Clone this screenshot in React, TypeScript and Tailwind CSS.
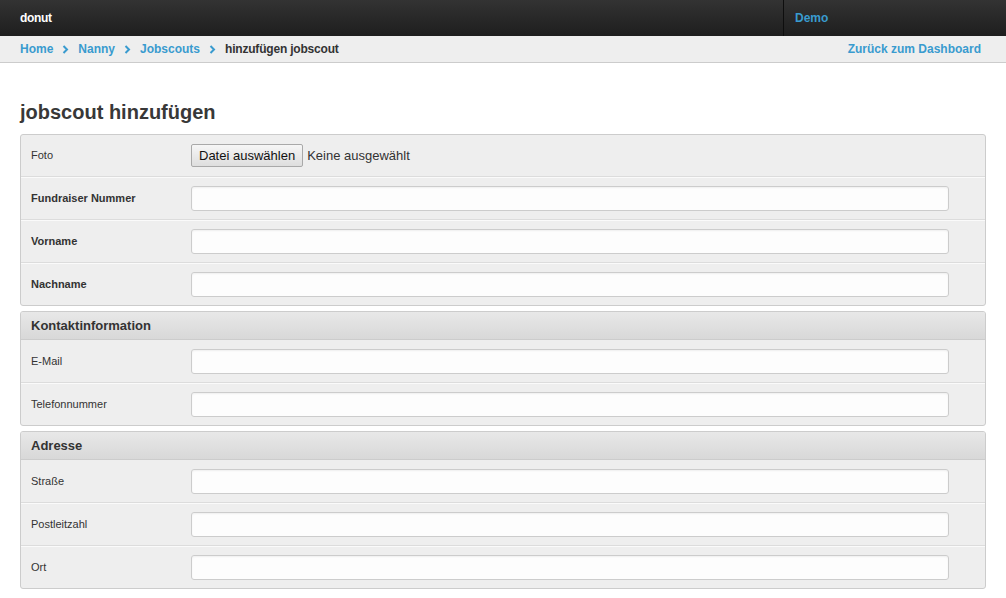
import React from "react"

type Field = { label: string; bold?: boolean; file?: boolean }

const stammdaten: Field[] = [
  { label: "Foto", file: true },
  { label: "Fundraiser Nummer", bold: true },
  { label: "Vorname", bold: true },
  { label: "Nachname", bold: true },
]

const kontakt: Field[] = [{ label: "E-Mail" }, { label: "Telefonnummer" }]

const adresse: Field[] = [{ label: "Straße" }, { label: "Postleitzahl" }, { label: "Ort" }]

function Row({ field, first, titled }: { field: Field; first: boolean; titled: boolean }) {
  const rowCls = first
    ? titled
      ? "h-[42px]"
      : "h-[41px]"
    : "h-[43px] border-t border-[#dcdcdc] shadow-[inset_0_1px_0_#fafafa]"
  return (
    <div className={`flex items-center pl-[10px] ${rowCls}`}>
      <label className={`w-[160px] text-[11px] text-[#333] ${field.bold ? "font-bold" : ""}`}>
        {field.label}
      </label>
      {field.file ? (
        <div className="flex items-center gap-[4px] text-[13px] text-[#333]">
          <span className="rounded-[2px] border border-[#a9a9a9] bg-gradient-to-b from-[#f6f6f6] to-[#dedede] px-[7px] py-[1px] text-[#111]">
            Datei auswählen
          </span>
          <span>Keine ausgewählt</span>
        </div>
      ) : (
        <input
          type="text"
          className="h-[25px] w-[758px] rounded-[3px] border border-[#cccccc] bg-[#fdfdfd] px-2 text-[13px] shadow-[inset_0_1px_2px_rgba(0,0,0,0.06)] outline-none"
        />
      )}
    </div>
  )
}

function Panel({ title, fields }: { title?: string; fields: Field[] }) {
  return (
    <div className="overflow-hidden rounded-[3px] border border-[#cccccc] bg-[#eeeeee]">
      {title && (
        <div className="flex h-[28px] items-center border-b border-[#cccccc] bg-gradient-to-b from-[#e8e8e8] to-[#d8d8d8] pl-[10px] text-[13px] font-bold text-[#333]">
          {title}
        </div>
      )}
      {fields.map((f, i) => (
        <Row key={f.label} field={f} first={i === 0} titled={!!title} />
      ))}
    </div>
  )
}

function Chevron() {
  return (
    <svg width="7" height="9" viewBox="0 0 7 9" className="mx-[9px]">
      <path d="M1.5 1 L5 4.5 L1.5 8" fill="none" stroke="#399bcf" strokeWidth="2" />
    </svg>
  )
}

export default function App() {
  return (
    <div className="min-h-[598px] bg-white font-['Liberation_Sans',Arial,sans-serif]">
      <div className="flex h-[36px] bg-gradient-to-b from-[#333333] to-[#1e1e1e]">
        <div className="flex flex-1 items-center pl-[20px] text-[12px] font-bold tracking-[-0.3px] text-white">
          donut
        </div>
        <div className="flex w-[223px] items-center border-l border-[#0e0e0e] pl-[11px] text-[12px] font-bold text-[#399bcf]">
          Demo
        </div>
      </div>
      <div className="flex h-[27px] items-center justify-between border-b border-[#cccccc] bg-[#eeeeee] px-[20px] pr-[25px] text-[12px] font-bold">
        <div className="flex items-center">
          <span className="text-[#399bcf]">Home</span>
          <Chevron />
          <span className="text-[#399bcf]">Nanny</span>
          <Chevron />
          <span className="text-[#399bcf]">Jobscouts</span>
          <Chevron />
          <span className="tracking-[-0.2px] text-[#333]">hinzufügen jobscout</span>
        </div>
        <span className="text-[#399bcf]">Zurück zum Dashboard</span>
      </div>
      <div className="px-[20px]">
        <h1 className="mt-[36px] mb-[9px] text-[20px] font-bold leading-[26px] text-[#383838]">
          jobscout hinzufügen
        </h1>
        <div className="flex flex-col gap-[5px]">
          <Panel fields={stammdaten} />
          <Panel title="Kontaktinformation" fields={kontakt} />
          <Panel title="Adresse" fields={adresse} />
        </div>
      </div>
    </div>
  )
}
